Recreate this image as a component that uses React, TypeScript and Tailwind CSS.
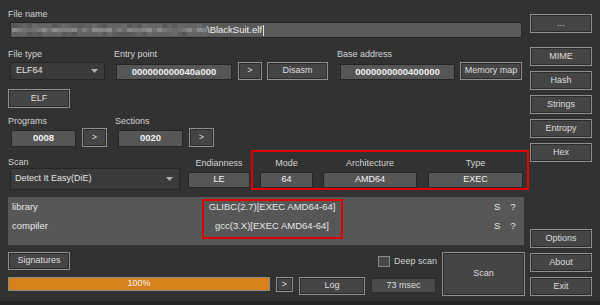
import React from "react";

const shades: number[] = Array.from({ length: 3 * 39 }, (_, i) => {
  const v = (i * 53 + ((i * i) % 29) * 3) % 44;
  const row = Math.floor(i / 39);
  return row === 1 ? 100 + v : 86 + Math.floor(v / 2);
});

function Btn({ children, className = "" }: { children: React.ReactNode; className?: string }) {
  return (
    <div
      className={`flex shrink-0 items-center justify-center whitespace-nowrap border border-[#8f8f8f] bg-[#454545] text-[#dedede] shadow-[inset_0_0_0_1px_#2c2c2c] ${className}`}
    >
      {children}
    </div>
  );
}

function Val({ children, className = "" }: { children: React.ReactNode; className?: string }) {
  return (
    <div
      className={`flex shrink-0 items-center justify-center whitespace-nowrap border border-[#262626] bg-[#565656] text-[#f2f2f2] ${className}`}
    >
      {children}
    </div>
  );
}

function Arrow() {
  return (
    <svg width="7" height="4" viewBox="0 0 7 4">
      <path d="M0 0 H7 L3.5 4 Z" fill="#b0b0b0" />
    </svg>
  );
}

export default function App() {
  return (
    <div className="flex h-[305px] w-[600px] flex-col overflow-hidden bg-[#323232] font-['Liberation_Sans',Arial,sans-serif] text-[9px] text-[#d4d4d4]">
      <div className="flex h-[301px]">
        {/* left column */}
        <div className="ml-[8px] flex w-[517px] shrink-0 flex-col">
          <div className="mt-[8px] h-[12px] leading-[12px]">File name</div>
          <div className="ml-[2px] mt-[2px] flex h-[16px] w-[512px] items-center border border-[#262626] bg-[#5a5a5a] pl-[1px]">
            <div className="grid w-[195px] grid-cols-[repeat(39,5px)] grid-rows-[repeat(3,4px)]">
              {shades.map((s, i) => (
                <div key={i} style={{ background: `rgb(${s},${s},${s})` }} />
              ))}
            </div>
            <span className="text-[9.5px] text-[#f0f0f0]">\BlackSuit.elf</span>
            <span className="ml-[1px] h-[11px] w-[1px] bg-[#e0e0e0]" />
          </div>

          {/* row 2 */}
          <div className="mt-[10px] flex h-[32px]">
            <div className="flex w-[106px] shrink-0 flex-col">
              <div className="h-[12px] leading-[12px]">File type</div>
              <div className="ml-[2px] mt-[2px] flex h-[18px] w-[95px] items-center justify-between border border-[#262626] bg-[#3b3b3b] pl-[5px] pr-[6px] text-[#e4e4e4]">
                <span>ELF64</span>
                <Arrow />
              </div>
            </div>
            <div className="flex w-[214px] shrink-0 flex-col">
              <div className="h-[12px] leading-[12px]">Entry point</div>
              <div className="mt-[2px] flex h-[18px] items-end">
                <Val className="ml-[2px] h-[16px] w-[116px] text-[9.5px] font-bold">000000000040a000</Val>
                <Btn className="ml-[6px] h-[18px] w-[24px]">&gt;</Btn>
                <Btn className="ml-[5px] h-[18px] w-[61px]">Disasm</Btn>
              </div>
            </div>
            <div className="ml-[9px] flex shrink-0 flex-col">
              <div className="h-[12px] leading-[12px]">Base address</div>
              <div className="mt-[2px] flex h-[18px] items-end">
                <Val className="ml-[3px] h-[16px] w-[115px] text-[9.5px] font-bold">0000000000400000</Val>
                <Btn className="ml-[5px] h-[18px] w-[62px]">Memory map</Btn>
              </div>
            </div>
          </div>

          {/* row 3 */}
          <Btn className="mt-[9px] h-[19px] w-[62px]">ELF</Btn>

          {/* row 4 */}
          <div className="mt-[7px] flex">
            <div className="flex w-[107px] shrink-0 flex-col">
              <div className="h-[13px] leading-[12px]">Programs</div>
              <div className="flex h-[19px] items-end">
                <Val className="ml-[3px] h-[17px] w-[65px] text-[9.5px] font-bold">0008</Val>
                <Btn className="ml-[6px] h-[19px] w-[25px]">&gt;</Btn>
              </div>
            </div>
            <div className="flex shrink-0 flex-col">
              <div className="h-[13px] leading-[12px]">Sections</div>
              <div className="flex h-[19px] items-end">
                <Val className="ml-[3px] h-[17px] w-[65px] text-[9.5px] font-bold">0020</Val>
                <Btn className="ml-[6px] h-[19px] w-[25px]">&gt;</Btn>
              </div>
            </div>
          </div>

          {/* row 5 */}
          <div className="mt-[3px] flex h-[40px]">
            <div className="flex w-[180px] shrink-0 flex-col">
              <div className="mt-[7px] h-[11px] leading-[11px]">Scan</div>
              <div className="ml-[2px] flex h-[22px] w-[170px] items-center justify-between border border-[#262626] bg-[#3b3b3b] pl-[4px] pr-[6px] text-[#e4e4e4]">
                <span>Detect It Easy(DiE)</span>
                <Arrow />
              </div>
            </div>
            <div className="flex w-[62px] shrink-0 flex-col">
              <div className="mt-[7px] h-[12px] text-center leading-[12px]">Endianness</div>
              <Val className="mt-[3px] h-[16px] w-[62px]">LE</Val>
            </div>
            <div className="ml-[1px] flex h-[40px] w-[278px] shrink-0 border-2 border-[#e10000]">
              <div className="ml-[7px] flex w-[53px] shrink-0 flex-col">
                <div className="mt-[5px] h-[12px] text-center leading-[12px]">Mode</div>
                <Val className="mt-[3px] h-[16px] w-[53px]">64</Val>
              </div>
              <div className="ml-[10px] flex w-[94px] shrink-0 flex-col">
                <div className="mt-[5px] h-[12px] text-center leading-[12px]">Architecture</div>
                <Val className="mt-[3px] h-[16px] w-[94px]">AMD64</Val>
              </div>
              <div className="ml-[11px] flex w-[95px] shrink-0 flex-col">
                <div className="mt-[5px] h-[12px] text-center leading-[12px]">Type</div>
                <Val className="mt-[3px] h-[16px] w-[95px]">EXEC</Val>
              </div>
            </div>
          </div>

          {/* results */}
          <div className="relative mt-[7px] flex h-[48px] w-[516px] flex-col bg-[#575757] pt-[1px] text-[9.5px] text-[#e6e6e6]">
            {[
              ["library", "GLIBC(2.7)[EXEC AMD64-64]"],
              ["compiler", "gcc(3.X)[EXEC AMD64-64]"],
            ].map(([n, r]) => (
              <div key={n} className="flex h-[19px] items-center whitespace-nowrap">
                <span className="w-[194px] shrink-0 pl-[4px]">{n}</span>
                <span className="w-[140px] shrink-0 text-center">{r}</span>
                <span className="ml-[152px]">S</span>
                <span className="ml-[10px]">?</span>
              </div>
            ))}
            <div className="absolute left-[194px] top-[2px] h-[40px] w-[141px] border-2 border-[#e10000]" />
          </div>

          {/* bottom */}
          <div className="mt-[7px] flex">
            <div className="flex w-[428px] shrink-0 flex-col">
              <div className="flex h-[19px] items-center whitespace-nowrap">
                <Btn className="h-[18px] w-[62px] self-start">Signatures</Btn>
                <div className="ml-[308px] h-[11px] w-[12px] shrink-0 border border-[#8a8a8a] bg-[#474747]" />
                <span className="ml-[4px] shrink-0">Deep scan</span>
              </div>
              <div className="mt-[6px] flex items-start">
                <div className="flex h-[14px] w-[262px] shrink-0 items-center justify-center border border-[#8a8a8a] bg-[#d8801b] text-[#f4f4f4]">
                  100%
                </div>
                <Btn className="ml-[6px] h-[15px] w-[17px]">&gt;</Btn>
                <Btn className="ml-[6px] h-[18px] w-[66px]">Log</Btn>
                <div className="ml-[6px] mt-[1px] flex h-[15px] w-[65px] shrink-0 items-center justify-center border border-[#2a2a2a] bg-[#4b4b4b] text-[#dedede]">
                  73 msec
                </div>
              </div>
            </div>
            <Btn className="ml-[6px] h-[44px] w-[83px]">Scan</Btn>
          </div>
        </div>

        {/* right column */}
        <div className="ml-[5px] flex w-[62px] shrink-0 flex-col pb-[5px]">
          <Btn className="mt-[14px] h-[19px] w-[62px]">...</Btn>
          <Btn className="mt-[14px] h-[19px] w-[62px]">MIME</Btn>
          <Btn className="mt-[5px] h-[19px] w-[62px]">Hash</Btn>
          <Btn className="mt-[5px] h-[19px] w-[62px]">Strings</Btn>
          <Btn className="mt-[5px] h-[19px] w-[62px]">Entropy</Btn>
          <Btn className="mt-[5px] h-[19px] w-[62px]">Hex</Btn>
          <Btn className="mt-auto h-[19px] w-[62px]">Options</Btn>
          <Btn className="mt-[5px] h-[19px] w-[62px]">About</Btn>
          <Btn className="mt-[5px] h-[19px] w-[62px]">Exit</Btn>
        </div>
      </div>
      <div className="h-[4px] bg-[#242424]" />
    </div>
  );
}
